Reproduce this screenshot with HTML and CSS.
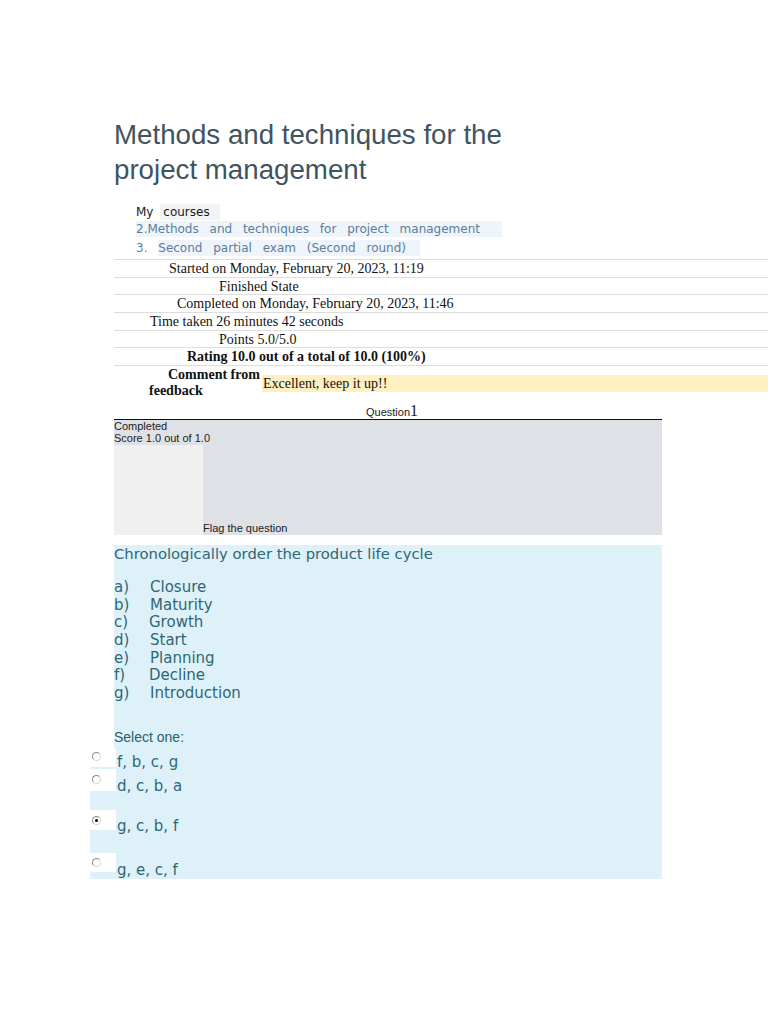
FILE: index.html
```html
<!DOCTYPE html>
<html>
<head>
<meta charset="utf-8">
<link rel="stylesheet" href="styles.css">
</head>
<body>
<div class="page">
  <h1 class="title">Methods and techniques for the<br>project management</h1>

  <nav class="crumbs">
    <div class="crumb c1">My <span class="hl">courses</span></div>
    <div class="crumb c2"><span class="hl">2.Methods and techniques for project management</span></div>
    <div class="crumb c3">3. <span class="hl">Second partial exam (Second round)</span></div>
  </nav>

  <div class="summary">
    <div class="row p-started">Started on Monday, February 20, 2023, 11:19</div>
    <div class="row p-state">Finished State</div>
    <div class="row p-completed">Completed on Monday, February 20, 2023, 11:46</div>
    <div class="row p-time">Time taken 26 minutes 42 seconds</div>
    <div class="row p-points">Points 5.0/5.0</div>
    <div class="row p-rating bold">Rating 10.0 out of a total of 10.0 (100%)</div>
    <div class="comment">
      <div class="comment-th">
        <div class="ct1">Comment from</div>
        <div class="ct2">feedback</div>
      </div>
      <div class="comment-td">Excellent, keep it up!!</div>
    </div>
  </div>

  <div class="qhead"><span class="qword">Question</span><span class="qnum">1</span></div>

  <div class="qinfo">
    <div class="qstate">Completed</div>
    <div class="qgrade">Score 1.0 out of 1.0</div>
    <div class="qflagrow">
      <div class="qflagleft"></div>
      <div class="qflag">Flag the question</div>
    </div>
  </div>

  <div class="formulation">
    <div class="qtext">Chronologically order the product life cycle</div>
    <ol class="items">
      <li><span class="lt">a)</span><span class="gap1"></span>Closure</li>
      <li><span class="lt">b)</span><span class="gap1"></span>Maturity</li>
      <li><span class="lt">c)</span><span class="gap2"></span>Growth</li>
      <li><span class="lt">d)</span><span class="gap1"></span>Start</li>
      <li><span class="lt">e)</span><span class="gap1"></span>Planning</li>
      <li><span class="lt">f)</span><span class="gap3"></span>Decline</li>
      <li><span class="lt">g)</span><span class="gap1"></span>Introduction</li>
    </ol>
    <div class="prompt">Select one:</div>
    <div class="answers">
      <div class="opt o1"><div class="rbox"><span class="radio"></span></div><div class="lbl">f, b, c, g</div></div>
      <div class="opt o2"><div class="rbox"><span class="radio"></span></div><div class="lbl">d, c, b, a</div></div>
      <div class="opt o3"><div class="rbox"><span class="radio checked"></span></div><div class="lbl">g, c, b, f</div></div>
      <div class="opt o4"><div class="rbox"><span class="radio"></span></div><div class="lbl">g, e, c, f</div></div>
    </div>
  </div>
</div>
</body>
</html>
```

FILE: styles.css
```css
html, body {
  margin: 0;
  padding: 0;
  background: #ffffff;
}
.page {
  padding: 117px 0 0 114px;
  width: 654px;
}
.title {
  margin: 0;
  font-family: "Liberation Sans", Arial, sans-serif;
  font-weight: normal;
  font-size: 27.7px;
  line-height: 35px;
  color: #3f5461;
  width: 440px;
}
.crumbs {
  margin-top: 16px;
  padding-left: 22px;
  font-family: "DejaVu Sans", Verdana, sans-serif;
  font-size: 12px;
  line-height: 18px;
}
.crumb.c1 {
  color: #1a1a1a;
  word-spacing: 3px;
  height: 17px;
}
.crumb.c1 .hl {
  background: #f1f4f7;
  padding: 1px 10px 1px 3px;
}
.crumb.c2 {
  color: #5b7ea0;
  word-spacing: 7px;
  height: 19px;
}
.crumb.c2 .hl {
  background: #eef4f9;
  padding: 1px 22px 1px 0;
}
.crumb.c3 {
  color: #5b7ea0;
  word-spacing: 7px;
  height: 18px;
}
.crumb.c3 .hl {
  background: #eef4f9;
  padding: 1px 14px 1px 0;
}
.summary {
  margin-top: 2px;
  font-family: "Liberation Serif", "Times New Roman", serif;
  font-size: 14px;
  color: #111111;
}
.row {
  border-top: 1px solid #dddddd;
  height: 16.67px;
  line-height: 17px;
  white-space: nowrap;
}
.row.p-rating {
  border-bottom: 1px solid #dddddd;
}
.bold { font-weight: bold; }
.p-started { padding-left: 55px; }
.p-state { padding-left: 105px; }
.p-completed { padding-left: 63px; }
.p-time { padding-left: 36px; }
.p-points { padding-left: 105px; }
.p-rating { padding-left: 73px; }
.comment {
  display: flex;
  height: 34px;
  padding-top: 1px;
}
.comment-th {
  width: 148px;
  font-weight: bold;
  line-height: 16px;
  white-space: nowrap;
}
.ct1 { padding-left: 54px; }
.ct2 { padding-left: 35px; }
.comment-td {
  flex: 1;
  margin-top: 8px;
  height: 17px;
  line-height: 17px;
  background: #ffefc1;
  padding-left: 1px;
}
.qhead {
  width: 548px;
  text-align: center;
  height: 19px;
  line-height: 19px;
  border-bottom: 1.5px solid #111111;
  color: #222;
  padding-left: 8px;
  box-sizing: border-box;
}
.qword {
  font-family: "Liberation Sans", Arial, sans-serif;
  font-size: 11px;
}
.qnum {
  font-family: "Liberation Serif", serif;
  font-size: 16px;
}
.qinfo {
  width: 548px;
  background: #dee1e5;
  font-family: "Liberation Sans", Arial, sans-serif;
  font-size: 11px;
  line-height: 12px;
  color: #222;
}
.qflagrow {
  display: flex;
  margin-top: 1px;
  height: 90px;
}
.qflagleft {
  width: 89px;
  background: #f0f0f0;
}
.qflag {
  align-self: flex-end;
  padding-bottom: 1px;
}
.formulation {
  margin-top: 10px;
  width: 548px;
  background: #def1f8;
  font-family: "DejaVu Sans", Verdana, sans-serif;
  font-size: 15px;
  color: #2f6777;
}
.qtext {
  line-height: 18px;
  font-size: 14.8px;
}
.items {
  list-style: none;
  margin: 16px 0 0 0;
  padding: 0;
  line-height: 17.7px;
}
.items li {
  display: flex;
  white-space: pre;
}
.lt { width: 22px; }
.gap1 { width: 14px; }
.gap2 { width: 13px; }
.gap3 { width: 13px; }
.prompt {
  margin-top: 25px;
  font-family: "Liberation Sans", Arial, sans-serif;
  font-size: 14px;
  line-height: 18px;
  height: 18px;
  color: #2a5f6f;
}
.answers {
  margin-left: -24px;
  margin-top: 3px;
  background: #def1f8;
  height: 130px;
}
.opt {
  display: flex;
  position: relative;
}
.rbox {
  width: 26px;
  background: #ffffff;
  position: relative;
}
.radio {
  position: absolute;
  left: 2px;
  width: 9px;
  height: 9px;
  border-radius: 50%;
  background: #ffffff;
  border: 1px solid;
  border-color: #8a8a8a #d8d8d8 #d8d8d8 #8a8a8a;
  box-sizing: border-box;
}
.radio.checked::after {
  content: "";
  position: absolute;
  left: 2px;
  top: 2px;
  width: 3px;
  height: 3px;
  border-radius: 50%;
  background: #000;
}
.lbl {
  line-height: 18px;
  padding-left: 1px;
}
.o1 { height: 20px; }
.o1 .rbox { height: 18px; }
.o1 .radio { top: 3px; }
.o1 .lbl { margin-top: 4px; }
.o2 { height: 22px; }
.o2 .rbox { height: 22px; }
.o2 .radio { top: 6px; }
.o2 .lbl { margin-top: 8px; }
.o3 { height: 20px; margin-top: 19px; }
.o3 .rbox { height: 20px; }
.o3 .radio { top: 6px; }
.o3 .lbl { margin-top: 7px; }
.o4 { height: 26px; margin-top: 23px; }
.o4 .rbox { height: 19px; }
.o4 .radio { top: 5px; }
.o4 .lbl { margin-top: 8px; }
```
